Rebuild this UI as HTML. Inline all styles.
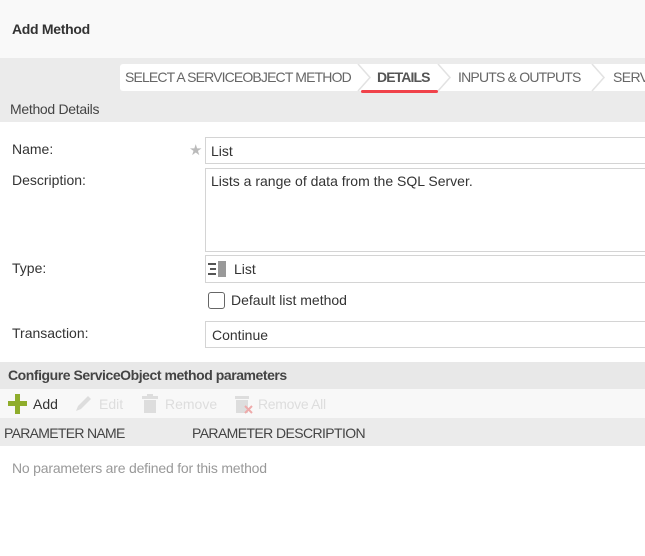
<!DOCTYPE html>
<html><head><style>
body{margin:0;width:645px;height:556px;overflow:hidden;background:#fff;font-family:"Liberation Sans",sans-serif;font-size:14px;color:#333;position:relative}
.a{position:absolute}
.inp{position:absolute;left:205px;width:450px;border:1px solid #d4d4d4;box-sizing:border-box;background:#fff}
.lbl{position:absolute;left:12px;font-size:14px;color:#333}
.tab{position:absolute;top:69px;font-size:14px;color:#666;white-space:nowrap;letter-spacing:-0.6px}
</style></head><body>
<div class="a" style="left:0;top:0;width:645px;height:58px;background:#f9f9f9"></div>
<div class="a" style="left:12px;top:21px;font-size:14px;font-weight:bold;color:#333;letter-spacing:-0.3px">Add Method</div>
<div class="a" style="left:0;top:58px;width:645px;height:64px;background:#ebebeb"></div>
<div class="a" style="left:120px;top:64px;width:525px;height:27px;background:#fff;border-radius:3px 0 0 3px"></div>
<svg class="a" style="left:0;top:64px" width="645" height="28"><g fill="none" stroke="#e2e2e2" stroke-width="1.5"><path d="M358 0 L370 13.5 L358 27"/><path d="M438 0 L450 13.5 L438 27"/><path d="M592 0 L604 13.5 L592 27"/></g></svg>
<div class="tab" style="left:125px;letter-spacing:-0.85px">SELECT A SERVICEOBJECT METHOD</div>
<div class="tab" style="left:377px;color:#555;font-weight:bold;letter-spacing:-0.9px">DETAILS</div>
<div class="tab" style="left:458px;letter-spacing:-0.8px">INPUTS &amp; OUTPUTS</div>
<div class="tab" style="left:613px">SERV</div>
<div class="a" style="left:361px;top:90px;width:77px;height:3px;background:#f0424a;border-radius:2px"></div>
<div class="a" style="left:10px;top:101px;color:#444;letter-spacing:-0.3px">Method Details</div>
<div class="lbl" style="top:141px">Name:</div>
<div class="a" style="left:189px;top:141px;color:#bbb;font-size:15px">★</div>
<div class="inp" style="top:137px;height:27px;padding:5px 5px">List</div>
<div class="lbl" style="top:172px">Description:</div>
<div class="inp" style="top:168px;height:84px;padding:4px 5px">Lists a range of data from the SQL Server.</div>
<div class="lbl" style="top:260px">Type:</div>
<div class="inp" style="top:255px;height:28px;padding:5px 0 0 28px">List</div>
<svg class="a" style="left:207px;top:260px" width="20" height="18"><g fill="#555"><rect x="1" y="3" width="8" height="2"/><rect x="3" y="8" width="6" height="2"/><rect x="1" y="13" width="8" height="2"/></g><rect x="11" y="1" width="8" height="16" fill="#999"/></svg>
<div class="a" style="left:208px;top:292px;width:15px;height:15px;border:1px solid #666;border-radius:3px"></div>
<div class="a" style="left:231px;top:292px">Default list method</div>
<div class="lbl" style="top:325px">Transaction:</div>
<div class="inp" style="top:321px;height:27px;padding:5px 6px">Continue</div>
<div class="a" style="left:0;top:362px;width:645px;height:27px;background:#e8e8e8"></div>
<div class="a" style="left:8px;top:367px;font-weight:bold;color:#444;letter-spacing:-0.45px">Configure ServiceObject method parameters</div>
<div class="a" style="left:0;top:389px;width:645px;height:29px;background:#f8f8f8"></div>
<svg class="a" style="left:8px;top:394px" width="20" height="20"><path d="M7 0h5v7h7v5h-7v8h-5v-8h-7v-5h7z" fill="#8fad2c"/></svg>
<div class="a" style="left:33px;top:396px">Add</div>
<svg class="a" style="left:74px;top:395px" width="20" height="18"><path d="M2 16l2-5 10-10 3 3-10 10z" fill="#ddd"/></svg>
<div class="a" style="left:99px;top:396px;color:#ddd">Edit</div>
<svg class="a" style="left:142px;top:394px" width="16" height="20"><g fill="#ddd"><rect x="0" y="2" width="16" height="3"/><rect x="5" y="0" width="6" height="3"/><path d="M2 6h12v13h-12z"/></g></svg>
<div class="a" style="left:165px;top:396px;color:#ddd">Remove</div>
<svg class="a" style="left:235px;top:394px" width="20" height="20"><g fill="#ddd"><rect x="0" y="2" width="14" height="3"/><path d="M1 6h12v13h-12z"/></g><path d="M10 12l7 7M17 12l-7 7" stroke="#eaa" stroke-width="2"/></svg>
<div class="a" style="left:258px;top:396px;color:#ddd;letter-spacing:-0.3px">Remove All</div>
<div class="a" style="left:0;top:418px;width:645px;height:28px;background:#ebebeb"></div>
<div class="a" style="left:4px;top:425px;color:#444;letter-spacing:-0.7px">PARAMETER NAME</div>
<div class="a" style="left:192px;top:425px;color:#444;letter-spacing:-0.6px">PARAMETER DESCRIPTION</div>
<div class="a" style="left:12px;top:460px;color:#999;letter-spacing:-0.2px">No parameters are defined for this method</div>
</body></html>
